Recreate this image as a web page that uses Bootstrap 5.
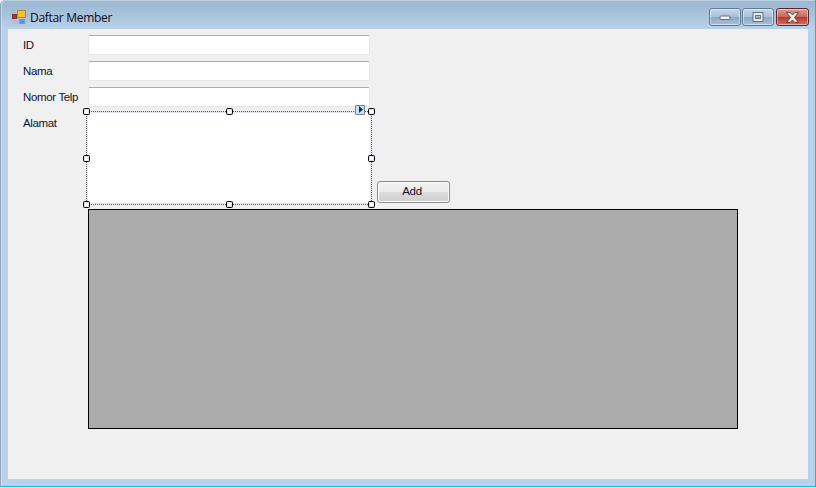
<!DOCTYPE html>
<html lang="id">
<head>
<meta charset="utf-8">
<title>Daftar Member</title>
<link href="https://cdn.jsdelivr.net/npm/bootstrap@5.3.0/dist/css/bootstrap.min.css" rel="stylesheet">
<style>
html,body{margin:0;padding:0;background:#fff;height:100%;overflow:hidden}
body{font-family:"Liberation Sans",Arial,sans-serif}
.win{width:816px;height:487px;padding:0 8px 7px 8px;background:linear-gradient(180deg,#9bb6d2 0,#a9c3dc 15px,#b9d1ea 29px,#b9d1ea 100%);border-bottom:1px solid #19b9d0;border-right:1px solid #19b9d0;border-left:1px solid #8fa6bd;border-top-left-radius:5px;box-shadow:inset 1px 1px 0 rgba(255,255,255,.35)}
.tbar{height:29px;padding-top:5px}
.ttl{font-family:"Open Sans","Noto Sans",sans-serif;font-size:12px;letter-spacing:-.3px;color:#0a0a14;margin-left:3px;padding-top:2px;line-height:1}
.winico{margin-left:2px;flex:none}
.capbtns{margin-right:-2px;gap:1px}
.capb{height:18px;width:32px;border:1px solid #5f7a96;border-radius:3px;background:linear-gradient(180deg,#c5d6e8 0,#a9c0d8 50%,#8ea9c5 52%,#a8c0d8 100%);box-shadow:inset 0 0 0 1px rgba(255,255,255,.45)}
.capb.cls{width:33px;margin-left:1px;border-color:#54282a;background:linear-gradient(180deg,#dd9a90 0,#c9685c 48%,#b23b2c 52%,#cf7264 100%)}
.client{width:800px;height:450px;margin-left:-1px;background:#f0f0f0;padding:6px 0 0 15px}
.lbl{width:65px;flex:none;font-size:11.5px;line-height:14px;color:#101030;padding-top:3px;letter-spacing:-.35px}
.txt{width:282px;height:20px;background:#fff;border:1px solid #e3e6ea;border-top-color:#ababab;border-radius:2px}
.frow{margin-bottom:6px;height:20px}
.frow4{height:90px;margin-bottom:6px}
.sel{width:282px;height:90px;background:#fff;outline:1px dotted #555;outline-offset:1px;box-shadow:0 0 0 1px #e3e6f0}
.hdl{position:absolute;width:7px;height:7px;background:#fff;border:1px solid #000;border-radius:1.5px;box-shadow:inset 0 0 1px #000}
.h1{left:-5px;top:-5px}.h2{left:138px;top:-5px}.h3{left:280px;top:-5px}
.h4{left:-5px;top:42px}.h5{left:280px;top:42px}
.h6{left:-5px;top:88px}.h7{left:138px;top:88px}.h8{left:280px;top:88px}
.tag{position:absolute;left:267px;top:-8px;width:10px;height:10px;background:#cfe0f0;border:1px solid #6c8298;border-radius:1px}
.tag svg{display:block;margin:0 0 0 2px}
.addb{width:73px;height:22px;margin-left:7px;align-self:flex-end;font-size:11.5px;letter-spacing:-.35px;line-height:1;padding:0 3px 0 0;color:#101030;border:1px solid #8c8c8c;border-radius:3px;background:linear-gradient(180deg,#f3f3f3 0,#ebebeb 48%,#dcdcdc 52%,#cfcfcf 100%);box-shadow:inset 0 0 0 1px #fbfbfb}
.grid-area{width:650px;height:220px;margin-left:65px;background:#ababab;border:1px solid #000}
</style>
</head>
<body>
<div class="win">
  <div class="tbar d-flex align-items-center">
    <svg width="16" height="16" viewBox="0 0 16 16" class="winico">
      <rect x="0.5" y="0.5" width="15" height="15" fill="#a9b5c0" opacity=".35"/>
      <rect x="1.5" y="5.5" width="4" height="4" fill="#c8281c" stroke="#7a3a30"/>
      <rect x="6.5" y="1.5" width="8" height="7" fill="#f6c22a" stroke="#b08a30"/>
      <rect x="8.5" y="10.5" width="5" height="4" fill="#5f90e0" stroke="#7c9cc8"/>
    </svg>
    <span class="ttl">Daftar Member</span>
    <div class="capbtns d-flex ms-auto">
      <div class="capb d-flex align-items-center justify-content-center">
        <svg width="12" height="6" viewBox="0 0 12 6"><rect x="1" y="2" width="10" height="3.500" rx="1" fill="#eef2f6" stroke="#48586a" stroke-width=".8"/></svg>
      </div>
      <div class="capb d-flex align-items-center justify-content-center">
        <svg width="12" height="10" viewBox="0 0 12 10"><path fill="#e4eaf0" stroke="#48586a" stroke-width=".8" fill-rule="evenodd" d="M1 .5h10v9H1zM3.500 3.500v3h5v-3z"/></svg>
      </div>
      <div class="capb cls d-flex align-items-center justify-content-center">
        <svg width="15" height="11" viewBox="0 0 15 11"><path fill="#f4eeec" stroke="#5a2b28" stroke-width=".8" d="M1.500.5h3.500l2.500 2.500 2.500-2.500h3.500l-4 5 4 5h-3.500l-2.500-2.500-2.500 2.500h-3.500l4-5z"/></svg>
      </div>
    </div>
  </div>
  <div class="client">
    <div class="frow d-flex"><div class="lbl">ID</div><div class="txt"></div></div>
    <div class="frow d-flex"><div class="lbl">Nama</div><div class="txt"></div></div>
    <div class="frow d-flex"><div class="lbl">Nomor Telp</div><div class="txt"></div></div>
    <div class="frow4 d-flex">
      <div class="lbl">Alamat</div>
      <div class="sel position-relative">
        <span class="hdl h1"></span><span class="hdl h2"></span><span class="hdl h3"></span>
        <span class="hdl h4"></span><span class="hdl h5"></span>
        <span class="hdl h6"></span><span class="hdl h7"></span><span class="hdl h8"></span>
        <span class="tag"><svg width="6" height="7" viewBox="0 0 6 7"><path d="M1 0l4 3.500-4 3.500z" fill="#0c2a50"/></svg></span>
      </div>
      <button type="button" class="btn addb">Add</button>
    </div>
    <div class="grid-area"></div>
  </div>
</div>
<script src="https://cdn.jsdelivr.net/npm/bootstrap@5.3.0/dist/js/bootstrap.bundle.min.js"></script>
</body>
</html>
